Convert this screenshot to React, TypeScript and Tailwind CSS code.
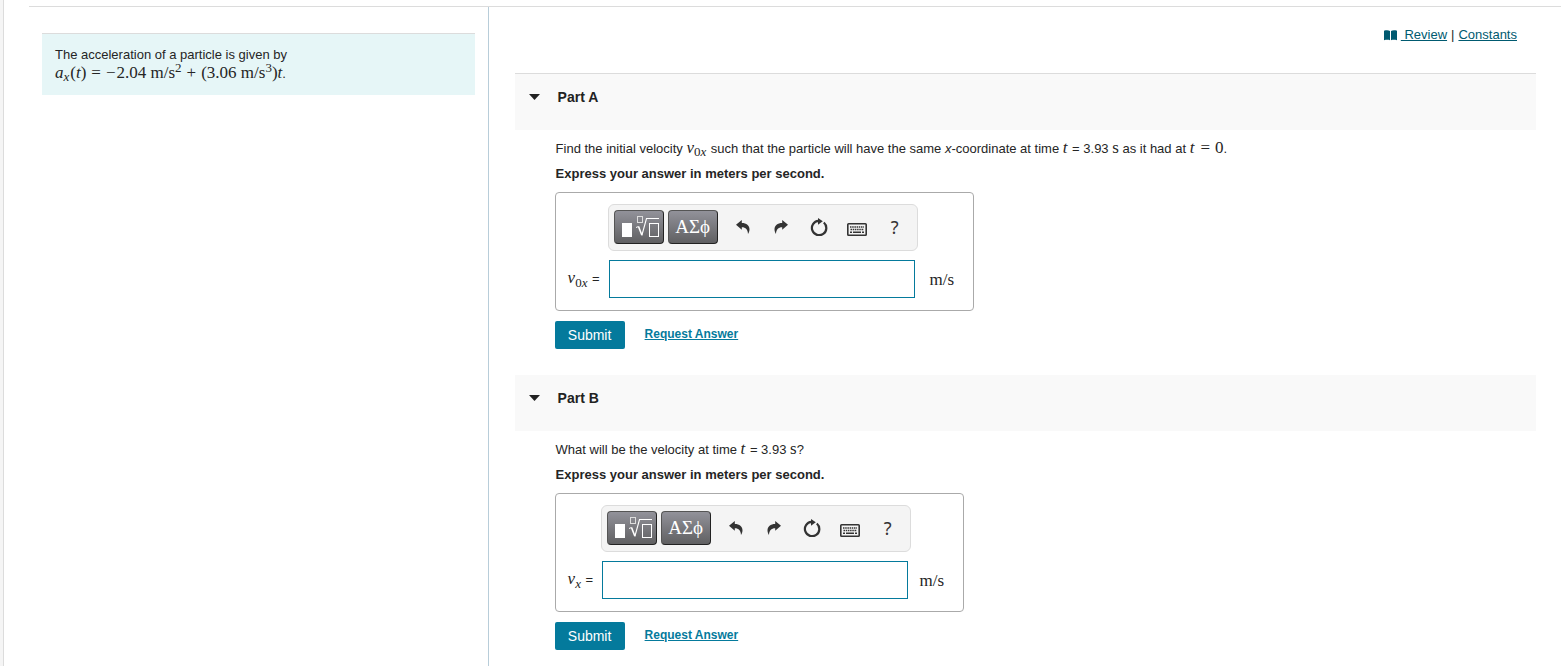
import { useState, type ReactNode } from "react";

interface Part {
  id: string;
  title: string;
  question: ReactNode;
  symbol: ReactNode;
  unit: string;
  headerClass: string;
  labelClass: string;
  unitClass: string;
}

function Var({ children, sub, subItalic }: { children: ReactNode; sub?: string; subItalic?: string }) {
  return (
    <span className="pr-px font-['Liberation_Serif',serif] text-[17px] leading-none italic">
      {children}
      {(sub || subItalic) && (
        <sub className="text-[13px]">
          {sub && <span className="not-italic">{sub}</span>}
          {subItalic}
        </sub>
      )}
    </span>
  );
}

function Roman({ children }: { children: ReactNode }) {
  return <span className="font-['Liberation_Serif',serif] text-[17px] leading-none">{children}</span>;
}

function Op({ children }: { children: ReactNode }) {
  return <span className="mx-[5px]">{children}</span>;
}

const parts: Part[] = [
  {
    id: "part-a",
    title: "Part A",
    question: (
      <>
        Find the initial velocity <Var sub="0" subItalic="x">v</Var> such that the particle will have the same{" "}
        <i>x</i>-coordinate at time <Var>t</Var> = 3.93 <Roman>s</Roman> as it had at <Var>t</Var>
        <Roman>
          <Op>=</Op>0
        </Roman>
        .
      </>
    ),
    symbol: <Var sub="0" subItalic="x">v</Var>,
    unit: "m/s",
    headerClass: "border-t border-[#dcdcdc]",
    labelClass: "w-[40px]",
    unitClass: "ml-3",
  },
  {
    id: "part-b",
    title: "Part B",
    question: (
      <>
        What will be the velocity at time <Var>t</Var> = 3.93 <Roman>s</Roman>?
      </>
    ),
    symbol: <Var subItalic="x">v</Var>,
    unit: "m/s",
    headerClass: "",
    labelClass: "w-[33px]",
    unitClass: "ml-[9px]",
  },
];

function BookIcon() {
  return (
    <svg width="13" height="11" viewBox="0 0 13 11" fill="#005a70" aria-hidden="true">
      <path d="M0 .8C2 .2 4.500 .2 6 .9V10.200C4.500 9.700 2 9.700 0 10.300ZM7 .9C8.500 .2 11 .2 13 .8V10.300C11 9.700 8.500 9.700 7 10.200Z" />
    </svg>
  );
}

function TemplateIcon() {
  return (
    <svg width="40" height="24" viewBox="0 0 40 24" fill="none" stroke="#fff" aria-hidden="true">
      <rect x="3" y="8" width="10" height="14" fill="#fff" stroke="none" />
      <rect x="18.500" y="1.500" width="5" height="6" stroke="#ddd" />
      <path d="M17 12.500 19.500 11.500" />
      <path d="M19.500 11.500 22.800 20" strokeWidth="1.600" />
      <path d="M22.800 20.500 27.500 3.500H40" strokeWidth="1.100" />
      <rect x="30.500" y="8.500" width="9" height="13" />
    </svg>
  );
}

function UndoIcon({ flip = false }: { flip?: boolean }) {
  return (
    <svg width="14" height="14" viewBox="0 0 14 14" fill="#333" aria-hidden="true">
      <path
        transform={flip ? "matrix(-1 0 0 1 14 0)" : undefined}
        d="M0 4.800 5.800 0V2.900C10.500 2.900 13.500 5.400 13.500 9.200 13.500 11 12.900 12.600 12 14 11.900 10 9.800 7.300 5.800 7.300V9.800Z"
      />
    </svg>
  );
}

function ResetIcon() {
  return (
    <svg width="18" height="18" viewBox="0 0 18 18" fill="none" aria-hidden="true">
      <path d="M13.800 4.500A7.200 7.200 0 1 1 8.500 2.800" stroke="#333" strokeWidth="2.200" />
      <path d="M8 0 12.800 3.200 8 6.800Z" fill="#333" />
    </svg>
  );
}

function KeyboardIcon() {
  return (
    <svg width="20" height="13" viewBox="0 0 20 13" fill="none" stroke="#333" aria-hidden="true">
      <rect x=".8" y=".8" width="18.400" height="11.400" rx=".8" strokeWidth="1.600" />
      <path d="M3 4H17" strokeWidth="1.500" strokeDasharray="1.500 .7" />
      <path d="M3.500 6.500H17" strokeWidth="1.500" strokeDasharray="1.500 .7" />
      <path d="M3 9.300H5M6 9.300H14M15 9.300H17" strokeWidth="1.500" />
    </svg>
  );
}

const tools: { label: string; icon: ReactNode }[] = [
  { label: "Undo", icon: <UndoIcon /> },
  { label: "Redo", icon: <UndoIcon flip /> },
  { label: "Reset", icon: <ResetIcon /> },
  { label: "Keyboard shortcuts", icon: <span className="pt-1"><KeyboardIcon /></span> },
  { label: "Help", icon: <span className="font-['Noto_Sans',sans-serif] text-[18px] text-[#333]">?</span> },
];

const darkButton =
  "flex h-[34px] w-[50px] cursor-pointer items-center justify-center rounded-[4px] border border-[#555] border-r-[#222] border-b-[#222] bg-linear-to-b from-[#92929a] to-[#606062] text-white";

function Toolbar() {
  return (
    <div className="flex rounded-[6px] border border-[#dcdcdc] bg-[#f4f4f4] py-[5px] pr-[3px] pl-[5px]">
      <button type="button" aria-label="Templates" className={darkButton}>
        <TemplateIcon />
      </button>
      <button type="button" className={`${darkButton} ml-1 font-['Liberation_Serif',serif] text-[19px]`}>
        ΑΣϕ
      </button>
      <div className="ml-[6px] flex h-[35px]">
        {tools.map((tool) => (
          <button
            key={tool.label}
            type="button"
            aria-label={tool.label}
            className="flex w-[38px] cursor-pointer items-center justify-center pb-px"
          >
            {tool.icon}
          </button>
        ))}
      </div>
    </div>
  );
}

function PartSection({ part }: { part: Part }) {
  const [open, setOpen] = useState(true);
  const [answer, setAnswer] = useState("");

  return (
    <section className="mb-[26px]">
      <h2 className={`bg-[#f9f9f9] pt-[13px] pb-[23px] pl-[14px] ${part.headerClass}`}>
        <button
          type="button"
          aria-expanded={open}
          onClick={() => setOpen(!open)}
          className="flex cursor-pointer items-center gap-[18px] text-[14px] leading-5 font-bold text-[#222]"
        >
          <svg width="11" height="6" viewBox="0 0 11 6" fill="#222" aria-hidden="true">
            <path d="M0 0H11L5.500 6Z" />
          </svg>
          {part.title}
        </button>
      </h2>

      {open && (
        <div className="pt-[9px] pl-10">
          <p className="pl-px leading-5">{part.question}</p>
          <p className="mt-[5px] pl-px leading-5 font-bold">Express your answer in meters per second.</p>

          <div className="mt-2 grid w-fit grid-cols-[auto_auto_auto] items-center gap-y-[9px] rounded-[4px] border border-[#aaa] pt-[11px] pr-4 pb-3 pl-3">
            <div className="col-start-2">
              <Toolbar />
            </div>
            <label htmlFor={part.id} className={`col-start-1 whitespace-nowrap ${part.labelClass}`}>
              {part.symbol} =
            </label>
            <div className="pr-[3px] pl-px">
              <input
                id={part.id}
                type="text"
                value={answer}
                onChange={(e) => setAnswer(e.target.value)}
                className="block h-[38px] w-full border border-[#047a9c] bg-white px-2 text-base outline-none"
              />
            </div>
            <span className={`min-w-[27px] pt-[3px] ${part.unitClass}`}>
              <Roman>{part.unit}</Roman>
            </span>
          </div>

          <div className="mt-[10px] flex items-start gap-5">
            <button type="button" className="h-7 w-[70px] cursor-pointer rounded-[2px] bg-[#047a9c] text-[14px] text-white">
              Submit
            </button>
            <a href="#request-answer" className="pt-[5px] text-[12px] leading-4 font-bold text-[#047a9c] underline">
              Request Answer
            </a>
          </div>
        </div>
      )}
    </section>
  );
}

export default function App() {
  return (
    <div className="flex min-h-screen bg-white font-['Liberation_Sans',Arial,sans-serif] text-[13px] text-[#252525]">
      <div className="w-1 shrink-0 border-r border-[#dcdcdc] bg-[#f5f5f5]" />
      <div className="flex grow pt-[6px] pr-[6px] pl-[25px]">
        <div className="flex grow border-t border-[#dcdcdc]">
          <aside className="w-[30%] shrink-0 border-r border-[#b8cdd9] pt-[26px] pr-[13px] pl-[13px]">
            <div className="border-t border-[#dcdcdc] bg-[#e6f6f7] px-[13px] py-3">
              <p className="leading-[18px]">The acceleration of a particle is given by</p>
              <p className="leading-[18px]">
                <Var subItalic="x">a</Var>
                <Roman>
                  (<i>t</i>)<Op>=</Op>−<span className="ml-px">2.04</span> m/s
                  <sup className="text-[13px]">2</sup>
                  <Op>+</Op>(3.06 m/s
                  <sup className="text-[13px]">3</sup>)<i>t</i>
                </Roman>
                .
              </p>
            </div>
          </aside>

          <main className="grow pr-[25px] pl-[26px]">
            <nav className="flex items-center justify-end pt-[18px] pr-[19px] pb-7 leading-5 text-[#005a70]">
              <BookIcon />
              <a href="#review" className="ml-1 whitespace-pre underline">
                {" Review"}
              </a>
              <span className="mx-1 text-[#252525]">|</span>
              <a href="#constants" className="underline">
                Constants
              </a>
            </nav>
            {parts.map((part) => (
              <PartSection key={part.id} part={part} />
            ))}
          </main>
        </div>
      </div>
    </div>
  );
}
